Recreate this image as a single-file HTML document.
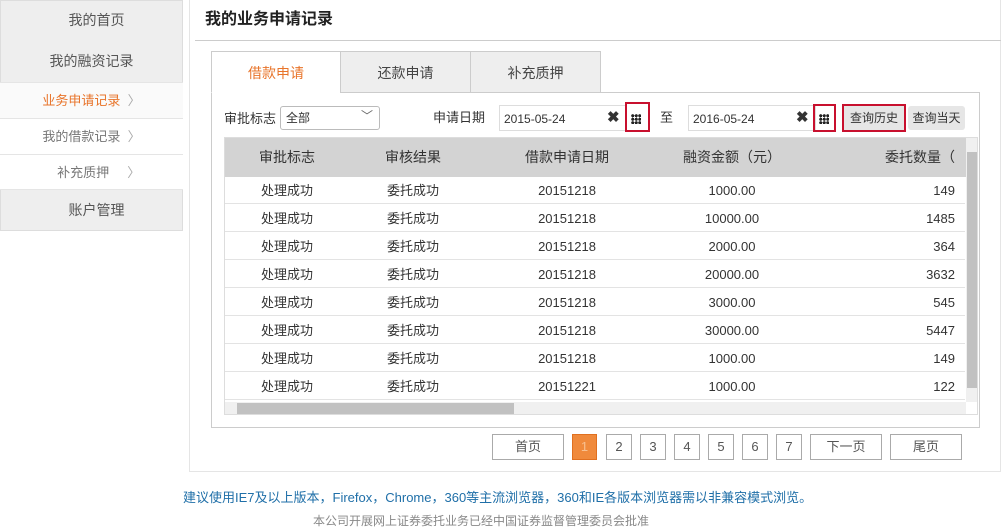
<!DOCTYPE html><html><head><meta charset="utf-8"><style>
*{margin:0;padding:0;box-sizing:border-box}
body{width:1003px;height:521px;overflow:hidden;background:#fff;font-family:"Liberation Sans","Noto Sans CJK SC",sans-serif;font-size:13px;color:#333;position:relative}
.a{position:absolute;line-height:16px}
.side div{position:absolute;left:0;width:183px;text-align:center}
.tab{position:absolute;top:51px;height:42px;line-height:42px;text-align:center;font-size:14px;border:1px solid #ccc}
.cell{position:absolute;text-align:center;line-height:16px}
.pg{position:absolute;top:434px;height:26px;line-height:24px;border:1px solid #aaa;text-align:center;color:#555;font-size:13px;background:#fff}
.red{position:absolute;border:2px solid #c8102e}
.grid{position:absolute;width:10px;height:10px;background:
radial-gradient(#222 1.5px,transparent 1.6px) 0 0/3.5px 3.5px}
</style></head><body>
<div class="a" style="left:0;top:0;width:183px;height:231px;border:1px solid #ddd;background:#eee"></div>
<div class="side">
<div style="top:0;height:41px;line-height:41px;font-size:14px;color:#555;padding-left:10px">我的首页</div>
<div style="top:41px;height:41px;line-height:41px;font-size:14px;color:#555;padding-left:0">我的融资记录</div>
<div style="top:82px;height:36px;line-height:36px;background:#fafafa;color:#e8742a;font-size:13px;border-top:1px solid #e5e5e5">业务申请记录 &nbsp;<span style="color:#aaa">〉</span></div>
<div style="top:118px;height:36px;line-height:36px;background:#fff;color:#777;border-top:1px solid #e5e5e5">我的借款记录 &nbsp;<span style="color:#aaa">〉</span></div>
<div style="top:154px;height:36px;line-height:36px;background:#fff;color:#777;border-top:1px solid #e5e5e5;border-bottom:1px solid #e5e5e5">&nbsp;&nbsp;&nbsp;&nbsp;补充质押 &nbsp;&nbsp;&nbsp;&nbsp;<span style="color:#aaa">〉</span></div>
<div style="top:190px;height:40px;line-height:40px;font-size:14px;color:#555;padding-left:10px">账户管理</div>
</div>
<div class="a" style="left:189px;top:0;width:812px;height:472px;border:1px solid #e5e5e5;border-top:none"></div>
<div class="a" style="left:205px;top:12px;font-size:16px;font-weight:bold;color:#222">我的业务申请记录</div>
<div class="a" style="left:195px;top:40px;width:806px;border-top:1px solid #ccc"></div>
<div class="a" style="left:211px;top:92px;width:769px;height:336px;border:1px solid #ccc"></div>
<div class="tab" style="left:211px;width:130px;background:#fff;color:#e8742a;border-bottom:1px solid #fff">借款申请</div>
<div class="tab" style="left:340px;width:131px;background:#eee;color:#444">还款申请</div>
<div class="tab" style="left:470px;width:131px;background:#eee;color:#444">补充质押</div>
<div class="a" style="left:224px;top:111px">审批标志</div>
<div class="a" style="left:280px;top:106px;width:100px;height:24px;border:1px solid #bbb;border-radius:3px;padding:3px 5px;font-size:12px">全部<span style="position:absolute;right:6px;top:1px;color:#666">﹀</span></div>
<div class="a" style="left:433px;top:110px">申请日期</div>
<div class="a" style="left:499px;top:105px;width:128px;height:26px;border:1px solid #ddd;background:#fff;padding:5px 4px;font-size:12px">2015-05-24</div>
<div class="a" style="left:607px;top:110px;font-size:15px;font-weight:bold">✖</div>
<div class="grid" style="left:631px;top:114px"></div>
<div class="red" style="left:625px;top:102px;width:25px;height:30px"></div>
<div class="a" style="left:660px;top:110px">至</div>
<div class="a" style="left:688px;top:105px;width:128px;height:26px;border:1px solid #ddd;background:#fff;padding:5px 4px;font-size:12px">2016-05-24</div>
<div class="a" style="left:796px;top:110px;font-size:15px;font-weight:bold">✖</div>
<div class="grid" style="left:819px;top:114px"></div>
<div class="red" style="left:813px;top:104px;width:23px;height:28px"></div>
<div class="a" style="left:843px;top:106px;width:62px;height:24px;background:#e6e6e6;font-size:12px;line-height:24px;text-align:center">查询历史</div>
<div class="red" style="left:842px;top:104px;width:64px;height:28px"></div>
<div class="a" style="left:908px;top:106px;width:57px;height:24px;background:#e6e6e6;font-size:12px;line-height:24px;text-align:center;border-radius:3px">查询当天</div>
<div class="a" style="left:224px;top:137px;width:754px;height:278px;border:1px solid #ddd;overflow:hidden">
<div class="a" style="left:0;top:0;width:741px;height:39px;background:#d3d3d3"></div>
<div class="a" style="left:741px;top:0;width:12px;height:264px;background:#f0f0f0"></div>
<div class="a" style="left:742px;top:14px;width:10px;height:236px;background:#c1c1c1"></div>
<div class="a" style="left:0;top:264px;width:741px;height:13px;background:#f0f0f0"></div>
<div class="a" style="left:12px;top:265px;width:277px;height:11px;background:#c1c1c1"></div>
</div>
<div id="t"></div>
<script>
var h=[["审批标志",287],["审核结果",413],["借款申请日期",567],["融资金额（元）",732]];
var s='';h.forEach(function(c){s+='<div class="cell" style="left:'+(c[1]-80)+'px;width:160px;top:149px;font-size:14px;color:#333">'+c[0]+'</div>'});
s+='<div class="a" style="left:885px;top:149px;font-size:14px">委托数量（</div>';
var d=[["20151218","1000.00",149],["20151218","10000.00",1485],["20151218","2000.00",364],["20151218","20000.00",3632],["20151218","3000.00",545],["20151218","30000.00",5447],["20151218","1000.00",149],["20151221","1000.00",122]];
d.forEach(function(r,i){var y=176+i*28;
s+='<div class="a" style="left:225px;top:'+(y+27)+'px;width:740px;border-top:1px solid #e3e3e3"></div>';
[["处理成功",287],["委托成功",413],[r[0],567],[r[1],732]].forEach(function(c){s+='<div class="cell" style="left:'+(c[1]-80)+'px;width:160px;top:'+(y+7)+'px">'+c[0]+'</div>'});
s+='<div class="a" style="right:48px;top:'+(y+7)+'px">'+r[2]+'</div>';});
document.getElementById('t').innerHTML=s;
</script>
<div class="pg" style="left:492px;width:72px">首页</div>
<div class="pg" style="left:572px;width:25px;background:#f08a3c;border-color:#e07020;color:#f8c090">1</div>
<div class="pg" style="left:606px;width:26px">2</div>
<div class="pg" style="left:640px;width:26px">3</div>
<div class="pg" style="left:674px;width:26px">4</div>
<div class="pg" style="left:708px;width:26px">5</div>
<div class="pg" style="left:742px;width:26px">6</div>
<div class="pg" style="left:776px;width:26px">7</div>
<div class="pg" style="left:810px;width:72px">下一页</div>
<div class="pg" style="left:890px;width:72px">尾页</div>
<div class="a" style="left:183px;top:490px;color:#1f6fa8;font-size:13px">建议使用IE7及以上版本，Firefox，Chrome，360等主流浏览器，360和IE各版本浏览器需以非兼容模式浏览。</div>
<div class="a" style="left:313px;top:513px;color:#888;font-size:12px">本公司开展网上证券委托业务已经中国证券监督管理委员会批准</div>
</body></html>
